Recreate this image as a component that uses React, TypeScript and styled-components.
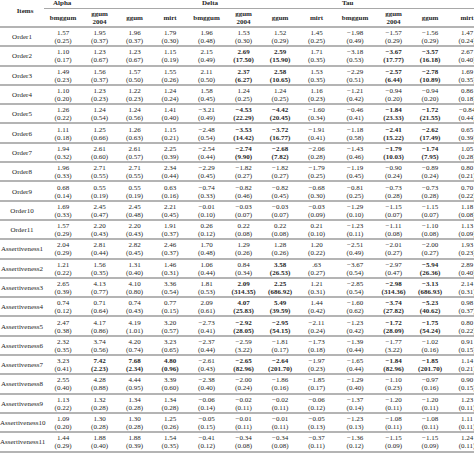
import React from 'react';
import styled, { createGlobalStyle } from 'styled-components';

const GlobalStyle = createGlobalStyle`
  html, body {
    margin: 0;
    padding: 0;
    background: #ffffff;
  }
`;

const Page = styled.div`
  width: 474px;
  height: 453px;
  overflow: hidden;
  background: #ffffff;
`;

const Table = styled.table`
  table-layout: fixed;
  width: 486px;
  border-collapse: separate;
  border-spacing: 0;
  margin-top: -8px;
  font-family: "Liberation Serif", "Times New Roman", serif;
  font-size: 7px;
  line-height: 8px;
  color: #262626;
`;

const GroupRow = styled.tr`
  height: 17px;
`;

const SubRow = styled.tr`
  height: 18px;
`;

const DataRow = styled.tr`
  height: 19.3px;
`;

const ItemsHead = styled.th`
  padding: 4px 0 0 6px;
  font-weight: 700;
  text-align: center;
  vertical-align: middle;
  border-bottom: 2px solid #b4b4b4;
`;

const GroupHead = styled.th<{ $indent: number }>`
  padding: 0 0 1px ${({ $indent }) => $indent}px;
  font-weight: 700;
  text-align: left;
  vertical-align: bottom;
  border-bottom: 1px solid #a8a8a8;
  white-space: nowrap;
`;

const SubHead = styled.th`
  padding: 1px 0 0;
  font-weight: 700;
  text-align: center;
  vertical-align: middle;
  border-bottom: 2px solid #b4b4b4;
`;

const Label = styled.td`
  padding: 1px 0 0;
  text-align: center;
  vertical-align: middle;
  white-space: nowrap;
  border-bottom: 2px solid #b4b4b4;
`;

const Cell = styled.td<{ $bold: boolean }>`
  padding: 1px 0 0;
  text-align: center;
  vertical-align: middle;
  white-space: nowrap;
  font-weight: ${({ $bold }) => ($bold ? 700 : 400)};
  border-bottom: 2px solid #b4b4b4;
`;

const Line = styled.div`
  display: block;
`;

const widths = [44, 38, 35, 35, 36, 37, 37, 36, 37, 40, 37, 36, 38];

const groups = [
  { name: 'Alpha', indent: 9 },
  { name: 'Delta', indent: 14 },
  { name: 'Tau', indent: 7 },
];

const methods = ['bmggum', 'ggum 2004', 'ggum', 'mirt'];

// "!" marks a bold cell, "|" splits estimate and standard error
const rows: [string, string[]][] = [
  ['Order1', ['1.57|0.25', '1.95|0.37', '1.96|0.37', '1.79|0.30', '1.96|0.48', '1.53|0.30', '1.52|0.29', '1.45|0.25', '−1.98|0.49', '−1.57|0.29', '−1.56|0.29', '1.47|0.24']],
  ['Order2', ['1.10|0.17', '1.23|0.67', '1.23|0.67', '1.15|0.19', '2.15|0.49', '!2.69|17.50', '!2.59|15.90', '1.71|0.35', '−3.18|0.53', '!−3.67|17.77', '!−3.57|16.18', '2.67|0.40']],
  ['Order3', ['1.49|0.23', '1.56|0.37', '1.57|0.50', '1.55|0.26', '2.11|0.50', '!2.37|6.27', '!2.58|10.65', '1.53|0.35', '−2.29|0.51', '!−2.57|6.44', '!−2.78|10.89', '1.69|0.35']],
  ['Order4', ['1.10|0.20', '1.23|0.23', '1.22|0.23', '1.24|0.24', '1.58|0.45', '1.24|0.25', '1.24|0.25', '1.16|0.23', '−1.21|0.42', '−0.94|0.20', '−0.94|0.20', '0.86|0.18']],
  ['Order5', ['1.26|0.22', '1.24|0.54', '1.24|0.56', '1.41|0.40', '−3.21|0.49', '!−4.53|22.29', '!−4.42|20.45', '−1.60|0.34', '−0.46|0.41', '!−1.84|23.33', '!−1.72|21.55', '−0.84|0.44']],
  ['Order6', ['1.11|0.18', '1.25|0.66', '1.26|0.63', '1.15|0.21', '−2.48|0.54', '!−3.53|14.42', '!−3.72|16.77', '−1.91|0.41', '−1.18|0.58', '!−2.41|15.22', '!−2.62|17.49', '0.65|0.39']],
  ['Order7', ['1.94|0.32', '2.61|0.60', '2.61|0.57', '2.25|0.39', '−2.54|0.44', '!−2.74|9.90', '!−2.68|7.82', '−2.06|0.28', '−1.43|0.46', '!−1.79|10.03', '!−1.74|7.95', '1.05|0.28']],
  ['Order8', ['1.96|0.33', '2.71|0.55', '2.71|0.55', '2.34|0.44', '−2.29|0.45', '−1.82|0.27', '−1.82|0.27', '−1.79|0.25', '−1.19|0.45', '−0.90|0.24', '−0.89|0.24', '0.80|0.21']],
  ['Order9', ['0.68|0.14', '0.55|0.19', '0.55|0.19', '0.63|0.16', '−0.74|0.33', '−0.82|0.46', '−0.82|0.45', '−0.68|0.30', '−0.81|0.25', '−0.73|0.28', '−0.73|0.28', '0.70|0.22']],
  ['Order10', ['1.69|0.33', '2.45|0.47', '2.45|0.48', '2.21|0.45', '−0.01|0.10', '−0.03|0.07', '−0.03|0.07', '−0.03|0.09', '−1.29|0.10', '−1.15|0.07', '−1.15|0.07', '1.18|0.08']],
  ['Order11', ['1.57|0.29', '2.20|0.43', '2.20|0.43', '1.91|0.37', '0.26|0.12', '0.22|0.08', '0.22|0.08', '0.21|0.10', '−1.23|0.11', '−1.11|0.08', '−1.10|0.08', '1.13|0.09']],
  ['Assertiveness1', ['2.04|0.29', '2.81|0.44', '2.82|0.45', '2.46|0.37', '1.70|0.48', '1.29|0.26', '1.28|0.26', '1.20|0.22', '−2.51|0.49', '−2.01|0.27', '−2.00|0.27', '1.93|0.23']],
  ['Assertiveness2', ['1.21|0.22', '1.56|0.35', '1.31|0.40', '1.46|0.31', '1.06|0.44', '0.84|0.34', '!3.58|26.53', '.63|0.27', '−3.67|0.54', '−2.97|0.47', '!−5.94|26.36', '2.89|0.40']],
  ['Assertiveness3', ['2.65|0.39', '4.13|0.77', '4.10|0.80', '3.36|0.54', '1.81|0.53', '!2.09|314.35', '!2.25|686.92', '1.21|0.31', '−2.85|0.54', '!−2.98|314.36', '!−3.13|686.93', '2.14|0.31']],
  ['Assertiveness4', ['0.74|0.12', '0.71|0.64', '0.74|0.43', '0.77|0.15', '2.09|0.61', '!4.07|25.83', '!5.49|39.59', '1.44|0.42', '−1.60|0.62', '!−3.74|27.82', '!−5.23|40.62', '0.98|0.37']],
  ['Assertiveness5', ['2.47|0.38', '4.17|0.86', '4.19|1.01', '3.20|0.57', '−2.73|0.41', '!−2.92|28.05', '!−2.95|54.15', '−2.11|0.24', '−1.23|0.42', '!−1.72|28.09', '!−1.75|54.24', '0.80|0.22']],
  ['Assertiveness6', ['2.32|0.35', '3.74|0.56', '4.20|0.74', '3.23|0.65', '−2.37|0.44', '−2.59|3.22', '−1.81|0.17', '−1.73|0.18', '−1.39|0.44', '−1.77|3.22', '−1.02|0.16', '0.91|0.15']],
  ['Assertiveness7', ['3.23|0.41', '!7.42|2.23', '!7.68|2.34', '!4.80|0.96', '−2.61|0.43', '!−2.65|82.96', '!−2.64|201.70', '−1.97|0.23', '−1.65|0.44', '!−1.84|82.96', '!−1.85|201.70', '1.14|0.21']],
  ['Assertiveness8', ['2.55|0.40', '4.28|0.88', '4.44|0.95', '3.39|0.60', '−2.38|0.40', '−2.00|0.24', '−1.86|0.16', '−1.85|0.17', '−1.29|0.40', '−1.10|0.23', '−0.97|0.16', '0.90|0.15']],
  ['Assertiveness9', ['1.13|0.22', '1.32|0.28', '1.34|0.28', '1.34|0.28', '−0.06|0.14', '−0.02|0.11', '−0.02|0.11', '−0.06|0.12', '−1.37|0.14', '−1.20|0.11', '−1.20|0.11', '1.23|0.11']],
  ['Assertiveness10', ['1.09|0.20', '1.30|0.28', '1.30|0.28', '1.25|0.26', '−0.05|0.15', '−0.01|0.11', '−0.01|0.11', '−0.05|0.13', '−1.23|0.13', '−1.08|0.11', '−1.08|0.11', '1.11|0.11']],
  ['Assertiveness11', ['1.44|0.29', '1.88|0.40', '1.88|0.39', '1.54|0.35', '−0.41|0.12', '−0.34|0.08', '−0.34|0.08', '−0.37|0.11', '−1.36|0.12', '−1.15|0.09', '−1.15|0.09', '1.24|0.11']],
];

const ValueCell: React.FC<{ raw: string }> = ({ raw }) => {
  const bold = raw.startsWith('!');
  const [estimate, se] = raw.replace('!', '').split('|');
  return (
    <Cell $bold={bold}>
      <Line>{estimate}</Line>
      <Line>({se})</Line>
    </Cell>
  );
};

export default function App() {
  return (
    <Page>
      <GlobalStyle />
      <Table>
        <colgroup>
          {widths.map((w, i) => (
            <col key={i} style={{ width: w }} />
          ))}
        </colgroup>
        <thead>
          <GroupRow>
            <ItemsHead rowSpan={2}>Items</ItemsHead>
            {groups.map((g) => (
              <GroupHead key={g.name} colSpan={4} $indent={g.indent}>
                {g.name}
              </GroupHead>
            ))}
          </GroupRow>
          <SubRow>
            {groups.map((g) =>
              methods.map((m) => (
                <SubHead key={g.name + m}>
                  {m.split(' ').map((part) => (
                    <Line key={part}>{part}</Line>
                  ))}
                </SubHead>
              ))
            )}
          </SubRow>
        </thead>
        <tbody>
          {rows.map(([label, values]) => (
            <DataRow key={label}>
              <Label>{label}</Label>
              {values.map((v, i) => (
                <ValueCell key={i} raw={v} />
              ))}
            </DataRow>
          ))}
        </tbody>
      </Table>
    </Page>
  );
}
